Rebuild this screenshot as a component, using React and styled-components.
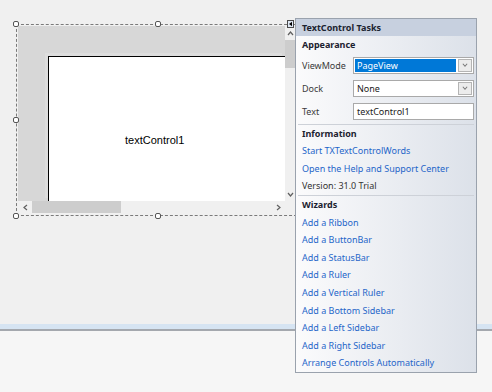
import React from "react";
import styled, { createGlobalStyle } from "styled-components";

const Global = createGlobalStyle`
  html, body {
    margin: 0;
    padding: 0;
    background: #f6f6f6;
  }
`;

const Page = styled.div`
  position: relative;
  width: 492px;
  height: 392px;
  display: flex;
  flex-direction: column;
  overflow: hidden;
  font-family: "Noto Sans", sans-serif;
`;

const Surface = styled.div`
  position: relative;
  height: 324px;
  background: #f0f0f0;
`;

const BlueBand = styled.div`
  height: 5px;
  background: #d6e4f2;
`;

const GrayLine = styled.div`
  height: 2px;
  background: #a4a8ae;
`;

const Below = styled.div`
  flex: 1;
  background: #f6f6f6;
`;

// the selected control sits at its place on the designer canvas
const Selection = styled.div`
  position: absolute;
  left: 16px;
  top: 24px;
  width: 281px;
  height: 192px;
  box-sizing: border-box;
  border: 1px dashed #7a7a7a;
  padding: 1px;
`;

const Control = styled.div`
  display: grid;
  grid-template-columns: 267px 10px;
  grid-template-rows: 175px 12px;
  height: 188px;
`;

const Canvas = styled.div`
  background: #d7d7d7;
  padding: 30px 0 0 30px;
  display: flex;
  overflow: hidden;
`;

const Sheet = styled.div`
  flex: 1;
  background: #fff;
  border-top: 1px solid #000;
  border-left: 1px solid #000;
  box-shadow: -3px -3px 0 #dddddd;
  padding: 77px 0 0 76px;
  font-family: "Liberation Sans", Arial, sans-serif;
  font-size: 11px;
  line-height: 13px;
  color: #000;
`;

const VScroll = styled.div`
  background: #f0f0f0;
  display: flex;
  flex-direction: column;
`;

const HScroll = styled.div`
  background: #f0f0f0;
  display: flex;
`;

const Corner = styled.div`
  background: #f0f0f0;
`;

const ArrowBox = styled.div`
  flex: 0 0 14px;
  display: flex;
  align-items: center;
  justify-content: center;
`;

const Thumb = styled.div`
  background: #cdcdcd;
  flex: 0 0 ${(p) => p.$size}px;
`;

const Spacer = styled.div`
  flex: 1;
`;

const Handle = styled.div`
  position: absolute;
  left: ${(p) => p.$x - 3}px;
  top: ${(p) => p.$y - 3}px;
  width: 4px;
  height: 4px;
  border: 1px solid #555;
  border-radius: 2px;
  background: #fff;
`;

const SmartTag = styled.svg`
  position: absolute;
  left: 287px;
  top: 20px;
`;

const Panel = styled.div`
  position: absolute;
  left: 295px;
  top: 18px;
  width: 182px;
  height: 355px;
  box-sizing: border-box;
  border: 1px solid #9aa2ad;
  background: linear-gradient(to right, #fbfbfc, #dce1e9);
  font-size: 9px;
  color: #3a3a3a;
`;

const Header = styled.div`
  height: 17px;
  line-height: 17px;
  padding-left: 6px;
  background: #c7d0df;
  font-weight: bold;
  color: #1c2430;
`;

const Title = styled.div`
  height: 17.6px;
  line-height: 17.6px;
  padding-left: 6px;
  font-weight: bold;
  color: #1c2230;
`;

const Item = styled.div`
  height: 17.6px;
  line-height: 17.6px;
  padding-left: 6px;
  color: ${(p) => (p.$link ? "#1f66c9" : "#333")};
`;

const Props = styled.div`
  display: grid;
  grid-template-columns: 51px 121px;
  grid-auto-rows: 23px;
  align-items: center;
  padding: 0 0 1px 6px;
`;

const Label = styled.div`
  color: #3a3a3a;
`;

const Combo = styled.div`
  height: 17px;
  box-sizing: border-box;
  border: 1px solid #a9a9a9;
  background: #fff;
  padding: 1px;
  display: flex;
  gap: 2px;
`;

const ComboValue = styled.div`
  flex: 1;
  padding-left: 2px;
  line-height: 13px;
  background: ${(p) => (p.$selected ? "#0078d7" : "transparent")};
  color: ${(p) => (p.$selected ? "#fff" : "#222")};
`;

const DropButton = styled.div`
  width: 12px;
  border: 1px solid #b4b4b4;
  background: #ececec;
  display: flex;
  align-items: center;
  justify-content: center;
`;

const TextBox = styled.div`
  height: 17px;
  box-sizing: border-box;
  border: 1px solid #a9a9a9;
  background: #fff;
  padding-left: 3px;
  line-height: 15px;
  color: #222;
`;

const Separator = styled.div`
  height: 1px;
  margin: 0 2px;
  background: #cdd1d8;
`;

const Chevron = ({ dir, size = 7, color = "#606060" }) => {
  const pts = {
    up: "1,5 3.5,2 6,5",
    down: "1,2 3.5,5 6,2",
    left: "5,1 2,3.5 5,6",
    right: "2,1 5,3.5 2,6",
  }[dir];
  return (
    <svg width={size} height={size} viewBox="0 0 7 7">
      <polyline points={pts} fill="none" stroke={color} strokeWidth="1.2" />
    </svg>
  );
};

const wizards = [
  "Add a Ribbon",
  "Add a ButtonBar",
  "Add a StatusBar",
  "Add a Ruler",
  "Add a Vertical Ruler",
  "Add a Bottom Sidebar",
  "Add a Left Sidebar",
  "Add a Right Sidebar",
  "Arrange Controls Automatically",
];

export default function App() {
  return (
    <Page>
      <Global />
      <Surface>
        <Selection>
          <Control>
            <Canvas>
              <Sheet>textControl1</Sheet>
            </Canvas>
            <VScroll>
              <ArrowBox>
                <Chevron dir="up" />
              </ArrowBox>
              <Thumb $size={28} />
              <Spacer />
              <ArrowBox>
                <Chevron dir="down" />
              </ArrowBox>
            </VScroll>
            <HScroll>
              <ArrowBox>
                <Chevron dir="left" />
              </ArrowBox>
              <Thumb $size={89} />
              <Spacer />
              <ArrowBox>
                <Chevron dir="right" />
              </ArrowBox>
            </HScroll>
            <Corner />
          </Control>
        </Selection>
        <Handle $x={16} $y={24} />
        <Handle $x={158} $y={24} />
        <Handle $x={16} $y={120} />
        <Handle $x={16} $y={216} />
        <Handle $x={158} $y={216} />
        <SmartTag width="7" height="8" viewBox="0 0 7 8">
          <rect x="0.5" y="0.5" width="6" height="7" fill="#dfe8f4" stroke="#4a4a4a" />
          <polygon points="2,4 5,1.8 5,6.2" fill="#000" />
        </SmartTag>
      </Surface>
      <BlueBand />
      <GrayLine />
      <Below />

      <Panel>
        <Header>TextControl Tasks</Header>
        <Title>Appearance</Title>
        <Props>
          <Label>ViewMode</Label>
          <Combo>
            <ComboValue $selected>PageView</ComboValue>
            <DropButton>
              <Chevron dir="down" size={6} color="#777" />
            </DropButton>
          </Combo>
          <Label>Dock</Label>
          <Combo>
            <ComboValue>None</ComboValue>
            <DropButton>
              <Chevron dir="down" size={6} color="#777" />
            </DropButton>
          </Combo>
          <Label>Text</Label>
          <TextBox>textControl1</TextBox>
        </Props>
        <Separator />
        <Title>Information</Title>
        <Item $link>Start TXTextControlWords</Item>
        <Item $link>Open the Help and Support Center</Item>
        <Item>Version: 31.0 Trial</Item>
        <Separator />
        <Title>Wizards</Title>
        {wizards.map((w) => (
          <Item $link key={w}>
            {w}
          </Item>
        ))}
      </Panel>
    </Page>
  );
}
